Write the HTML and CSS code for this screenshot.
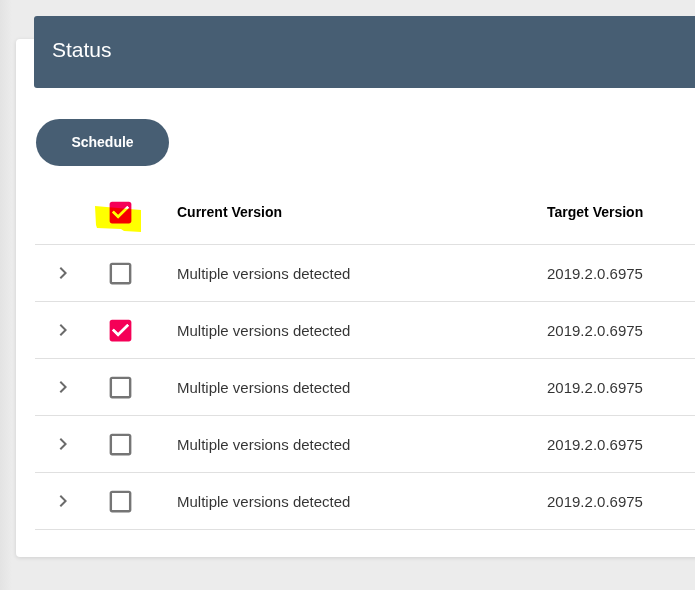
FILE: index.html
```html
<!DOCTYPE html>
<html>
<head>
<meta charset="utf-8">
<link rel="stylesheet" href="styles.css">
</head>
<body>
<div class="card">
  <div class="card-header"><span class="title">Status</span></div>
  <button class="btn">Schedule</button>
  <div class="table">
    <div class="row head">
      <div class="cell"></div>
      <div class="cell center">
        <span class="hl-wrap">
          <svg class="cb" viewBox="0 0 24 24"><path fill="#f50057" d="M19 3H5c-1.11 0-2 .9-2 2v14c0 1.1.89 2 2 2h14c1.1 0 2-.9 2-2V5c0-1.1-.9-2-2-2zm-9 14l-5-5 1.41-1.41L10 14.17l7.59-7.59L19 8l-9 9z"/><path fill="#fff" d="M10 17l-5-5 1.41-1.41L10 14.17l7.59-7.59L19 8l-9 9z"/></svg>
          <svg class="marker" viewBox="0 0 48 27"><polygon fill="#ffff00" points="1,0 47,4 47,26 30,25 27,23 3,22 2,19"/></svg>
        </span>
      </div>
      <div class="cell text">Current Version</div>
      <div class="cell">Target Version</div>
    </div>
    <div class="row">
      <div class="cell"><svg class="chev" viewBox="0 0 24 24"><path d="M8.59 16.59L13.17 12 8.59 7.41 10 6l6 6-6 6-1.41-1.41z"/></svg></div>
      <div class="cell center"><svg class="cb" viewBox="0 0 24 24"><path fill="#757575" d="M19 5v14H5V5h14m0-2H5c-1.11 0-2 .9-2 2v14c0 1.1.89 2 2 2h14c1.1 0 2-.9 2-2V5c0-1.1-.9-2-2-2z"/></svg></div>
      <div class="cell text">Multiple versions detected</div>
      <div class="cell">2019.2.0.6975</div>
    </div>
    <div class="row">
      <div class="cell"><svg class="chev" viewBox="0 0 24 24"><path d="M8.59 16.59L13.17 12 8.59 7.41 10 6l6 6-6 6-1.41-1.41z"/></svg></div>
      <div class="cell center"><svg class="cb" viewBox="0 0 24 24"><path fill="#f50057" d="M19 3H5c-1.11 0-2 .9-2 2v14c0 1.1.89 2 2 2h14c1.1 0 2-.9 2-2V5c0-1.1-.9-2-2-2zm-9 14l-5-5 1.41-1.41L10 14.17l7.59-7.59L19 8l-9 9z"/><path fill="#fff" d="M10 17l-5-5 1.41-1.41L10 14.17l7.59-7.59L19 8l-9 9z"/></svg></div>
      <div class="cell text">Multiple versions detected</div>
      <div class="cell">2019.2.0.6975</div>
    </div>
    <div class="row">
      <div class="cell"><svg class="chev" viewBox="0 0 24 24"><path d="M8.59 16.59L13.17 12 8.59 7.41 10 6l6 6-6 6-1.41-1.41z"/></svg></div>
      <div class="cell center"><svg class="cb" viewBox="0 0 24 24"><path fill="#757575" d="M19 5v14H5V5h14m0-2H5c-1.11 0-2 .9-2 2v14c0 1.1.89 2 2 2h14c1.1 0 2-.9 2-2V5c0-1.1-.9-2-2-2z"/></svg></div>
      <div class="cell text">Multiple versions detected</div>
      <div class="cell">2019.2.0.6975</div>
    </div>
    <div class="row">
      <div class="cell"><svg class="chev" viewBox="0 0 24 24"><path d="M8.59 16.59L13.17 12 8.59 7.41 10 6l6 6-6 6-1.41-1.41z"/></svg></div>
      <div class="cell center"><svg class="cb" viewBox="0 0 24 24"><path fill="#757575" d="M19 5v14H5V5h14m0-2H5c-1.11 0-2 .9-2 2v14c0 1.1.89 2 2 2h14c1.1 0 2-.9 2-2V5c0-1.1-.9-2-2-2z"/></svg></div>
      <div class="cell text">Multiple versions detected</div>
      <div class="cell">2019.2.0.6975</div>
    </div>
    <div class="row">
      <div class="cell"><svg class="chev" viewBox="0 0 24 24"><path d="M8.59 16.59L13.17 12 8.59 7.41 10 6l6 6-6 6-1.41-1.41z"/></svg></div>
      <div class="cell center"><svg class="cb" viewBox="0 0 24 24"><path fill="#757575" d="M19 5v14H5V5h14m0-2H5c-1.11 0-2 .9-2 2v14c0 1.1.89 2 2 2h14c1.1 0 2-.9 2-2V5c0-1.1-.9-2-2-2z"/></svg></div>
      <div class="cell text">Multiple versions detected</div>
      <div class="cell">2019.2.0.6975</div>
    </div>
  </div>
</div>
</body>
</html>
```
FILE: styles.css
```css
html, body {
  margin: 0;
  height: 100%;
}
body {
  background: linear-gradient(to right, #e3e3e3 0, #ececec 12px) #ececec;
  font-family: "Liberation Sans", Arial, sans-serif;
  padding: 39px 0 0 16px;
  box-sizing: border-box;
  overflow: hidden;
}
.card {
  display: flex;
  flex-direction: column;
  align-items: flex-start;
  width: 760px;
  background: #fff;
  border-radius: 4px;
  box-shadow: 0 1px 4px rgba(0, 0, 0, 0.12);
  padding: 0 0 27px 0;
}
.card-header {
  align-self: stretch;
  margin: -23px 18px 0 18px;
  height: 72px;
  background: #475e73;
  border-radius: 3px;
  display: flex;
  align-items: center;
  padding: 0 0 4px 18px;
  box-sizing: border-box;
}
.title {
  color: #fff;
  font-size: 21px;
}
.btn {
  margin: 31px 0 0 20px;
  width: 133px;
  height: 47px;
  border: none;
  border-radius: 24px;
  background: #475e73;
  color: #fff;
  font-family: "Liberation Sans", Arial, sans-serif;
  font-weight: bold;
  font-size: 14px;
  padding: 0 0 1px 0;
}
.table {
  align-self: stretch;
  margin-left: 19px;
}
.row {
  display: grid;
  grid-template-columns: 55px 60px 397px 1fr;
  align-items: center;
  height: 57px;
  box-sizing: border-box;
  border-bottom: 1px solid #e0e0e0;
  font-size: 15px;
  color: rgba(0, 0, 0, 0.8);
}
.row.head {
  height: 79px;
  padding-top: 14px;
  font-size: 14px;
  font-weight: bold;
  color: #000;
}
.cell {
  display: flex;
  align-items: center;
}
.cell.center {
  justify-content: center;
}
.cell.text {
  padding-left: 27px;
}
.chev {
  width: 24px;
  height: 24px;
  margin-left: 16px;
  fill: #6b6b6b;
}
.cb {
  width: 29px;
  height: 29px;
  display: block;
}
.hl-wrap {
  position: relative;
  display: block;
}
.marker {
  position: absolute;
  left: -12px;
  top: 8px;
  width: 48px;
  height: 27px;
  mix-blend-mode: multiply;
}
```
